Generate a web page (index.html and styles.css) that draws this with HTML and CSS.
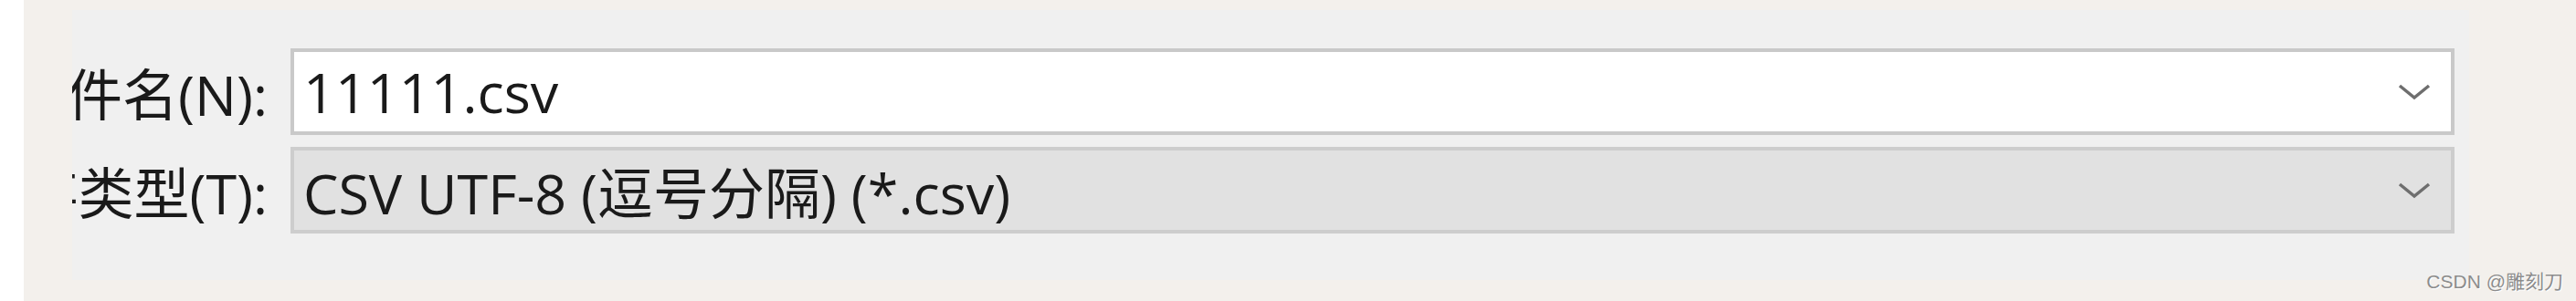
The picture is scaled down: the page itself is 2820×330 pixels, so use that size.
FILE: index.html
```html
<!DOCTYPE html>
<html lang="zh-CN">
<head>
    <meta charset="UTF-8">
    <title>另存为</title>
    <link rel="stylesheet" href="styles.css">
</head>
<body>
    <div class="page">
        <div class="strip"></div>
        <div class="backdrop">
            <div class="panel">
                <div class="row">
                    <div class="label">文件名(N):</div>
                    <div class="field field-input">
                        <span class="value">11111.csv</span>
                        <svg class="chevron" width="36" height="20" viewBox="0 0 36 20">
                            <polyline points="2,3 18,16 34,3" fill="none" stroke="#6e6e6e" stroke-width="3.5"/>
                        </svg>
                    </div>
                </div>
                <div class="row">
                    <div class="label">保存类型(T):</div>
                    <div class="field field-select">
                        <span class="value">CSV UTF-8 (逗号分隔) (*.csv)</span>
                        <svg class="chevron" width="36" height="20" viewBox="0 0 36 20">
                            <polyline points="2,3 18,16 34,3" fill="none" stroke="#6e6e6e" stroke-width="3.5"/>
                        </svg>
                    </div>
                </div>
            </div>
        </div>
        <div class="watermark">CSDN @雕刻刀</div>
    </div>
</body>
</html>
```

FILE: styles.css
```css
body {
    margin: 0;
    background-color: #f3f0ec;
    font-family: "Open Sans", "Noto Sans CJK SC", sans-serif;
}

.page {
    position: relative;
    display: flex;
    width: 2820px;
    height: 330px;
}

.strip {
    width: 26px;
    background-color: #ffffff;
}

.backdrop {
    flex: 1;
    padding: 11px 117px 23px 53px;
}

.panel {
    height: 100%;
    background-color: #f0f0f0;
    padding: 42px 16px 0 0;
    box-sizing: border-box;
    display: flex;
    flex-direction: column;
    gap: 13px;
}

.row {
    display: flex;
    align-items: center;
}

.label {
    width: 214px;
    margin-right: 25px;
    overflow: hidden;
    white-space: nowrap;
    display: flex;
    justify-content: flex-end;
    font-size: 61px;
    color: #1a1a1a;
}

.field {
    flex: 1;
    height: 95px;
    box-sizing: border-box;
    border: 4px solid #c9c9c9;
    display: flex;
    align-items: center;
    justify-content: space-between;
    padding: 0 22px 0 10px;
    font-size: 61px;
    color: #1a1a1a;
    white-space: nowrap;
}

.field-input {
    background-color: #ffffff;
}

.field-select {
    background-color: #e1e1e1;
    border-color: #cdcdcd;
}

.chevron {
    flex: none;
}

.watermark {
    position: absolute;
    right: 14px;
    bottom: 8px;
    font-family: "Liberation Sans", "Noto Sans CJK SC", sans-serif;
    font-size: 21px;
    color: #8c8c8c;
    text-shadow: 1px 1px 0 #ffffff;
}
```
